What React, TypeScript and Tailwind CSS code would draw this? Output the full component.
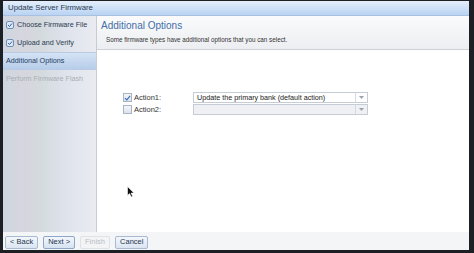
import React from "react";

const steps = [
  { label: "Choose Firmware File", done: true },
  { label: "Upload and Verify", done: true },
  { label: "Additional Options", active: true },
  { label: "Perform Firmware Flash", disabled: true },
];

function Check({ checked }: { checked?: boolean }) {
  return (
    <span className="w-[9px] h-[9px] border border-[#a9b3c3] bg-gradient-to-b from-[#f4f6f9] to-[#dde3ec] flex items-center justify-center shrink-0">
      {checked && (
        <svg width="8" height="8" viewBox="0 0 8 8">
          <path d="M1.2 4.2 L3.2 6.2 L7 1.6" fill="none" stroke="#3b6fb6" strokeWidth="1.3" />
        </svg>
      )}
    </span>
  );
}

function StepIcon() {
  return (
    <span className="w-[8px] h-[8px] rounded-[2px] border border-[#6f8fb8] bg-[#dce8f6] flex items-center justify-center shrink-0">
      <svg width="6" height="6" viewBox="0 0 6 6">
        <path d="M1 3 L2.5 4.5 L5 1.5" fill="none" stroke="#2f5f9c" strokeWidth="1" />
      </svg>
    </span>
  );
}

function Select({ value, disabled }: { value?: string; disabled?: boolean }) {
  return (
    <div
      className={`w-[175px] h-[11px] border border-[#c5ccd6] flex ${
        disabled ? "bg-[#eef0f3]" : "bg-white"
      }`}
    >
      <div className="flex-1 px-[3px] text-[7.2px] leading-[10px] text-[#222] truncate">{value}</div>
      <div className="w-[12px] border-l border-[#d5dae1] flex items-center justify-center">
        <svg width="5" height="3" viewBox="0 0 5 3">
          <path d="M0 0 L5 0 L2.5 3 Z" fill="#9aa3ad" />
        </svg>
      </div>
    </div>
  );
}

function Btn({ children, disabled, primary }: { children: React.ReactNode; disabled?: boolean; primary?: boolean }) {
  return (
    <div
      className={`h-[13px] px-[4px] flex items-center border rounded-[2px] text-[7.5px] ${
        disabled
          ? "border-[#dfe3e8] bg-[#f2f4f6] text-[#b9bec5]"
          : primary
          ? "border-[#8ea7c7] bg-gradient-to-b from-[#f3f7fc] to-[#d7e3f1] text-[#1e3550]"
          : "border-[#a9b9cf] bg-gradient-to-b from-[#f3f7fc] to-[#dbe5f1] text-[#1e3550]"
      }`}
    >
      {children}
    </div>
  );
}

export default function App() {
  return (
    <div
      className="w-[474px] h-[253px] bg-[#1c1f24] pl-[3px] pr-[5px] pt-[1px] pb-[3px]"
      style={{ fontFamily: '"Liberation Sans", Arial, sans-serif' }}
    >
      <div className="relative w-full h-full bg-white flex flex-col overflow-hidden">
        <div className="h-[15px] shrink-0 bg-gradient-to-b from-[#e4eefb] to-[#b9d3f2] border-b border-[#a9c1e0] flex items-center px-[5px] text-[7.8px] text-[#2a3a50]">
          Update Server Firmware
        </div>
        <div className="flex flex-1 min-h-0">
          <div className="w-[94px] shrink-0 border-r border-[#c7ccd3] bg-[linear-gradient(90deg,#cfd6e0_0%,#d6d6de_22%,#d3dadd_40%,#dbe0e8_58%,#e3e6ee_78%,#e9ebf0_100%)] flex flex-col">
            {steps.map((s) => (
              <div
                key={s.label}
                className={`h-[18px] flex items-center gap-[3px] px-[3px] text-[7.2px] whitespace-nowrap ${
                  s.active
                    ? "bg-gradient-to-b from-[#d5e3f5] to-[#b7cde9] text-[#223c62] border-y border-[#b9cbe2]"
                    : s.disabled
                    ? "text-[#a9aeb5]"
                    : "text-[#2a3a50]"
                }`}
              >
                {s.done && <StepIcon />}
                {s.label}
              </div>
            ))}
          </div>
          <div className="flex-1 flex flex-col">
            <div className="h-[34px] shrink-0 bg-gradient-to-b from-[#fbfbfc] to-[#eceef1] border-b border-[#cdd1d6] px-[4px] pt-[2px]">
              <div className="text-[10px] text-[#3f6fa8] leading-[15px]">Additional Options</div>
              <div className="text-[6.3px] text-[#333] pl-[5px] pt-[2px]">
                Some firmware types have additional options that you can select.
              </div>
            </div>
            <div className="flex-1 pl-[26px] pt-[42px] flex flex-col gap-[1px]">
              <div className="flex items-center">
                <Check checked />
                <span className="w-[61px] pl-[2px] text-[7.5px] text-[#333]">Action1:</span>
                <Select value="Update the primary bank (default action)" />
              </div>
              <div className="flex items-center">
                <Check />
                <span className="w-[61px] pl-[2px] text-[7.5px] text-[#333]">Action2:</span>
                <Select disabled />
              </div>
            </div>
          </div>
        </div>
        <div className="h-[18px] shrink-0 bg-[#f4f5f7] flex items-center gap-[5px] px-[2px] pt-[2px]">
          <Btn>&lt; Back</Btn>
          <Btn primary>Next &gt;</Btn>
          <Btn disabled>Finish</Btn>
          <Btn>Cancel</Btn>
        </div>
        <svg className="absolute left-[124px] top-[185px]" width="8" height="12" viewBox="0 0 8 12">
          <path d="M0.5 0.5 L0.5 9.5 L2.6 7.6 L4.2 11 L5.6 10.3 L4.1 7.1 L7 7.1 Z" fill="#111" stroke="#fff" strokeWidth="0.6" />
        </svg>
      </div>
    </div>
  );
}
